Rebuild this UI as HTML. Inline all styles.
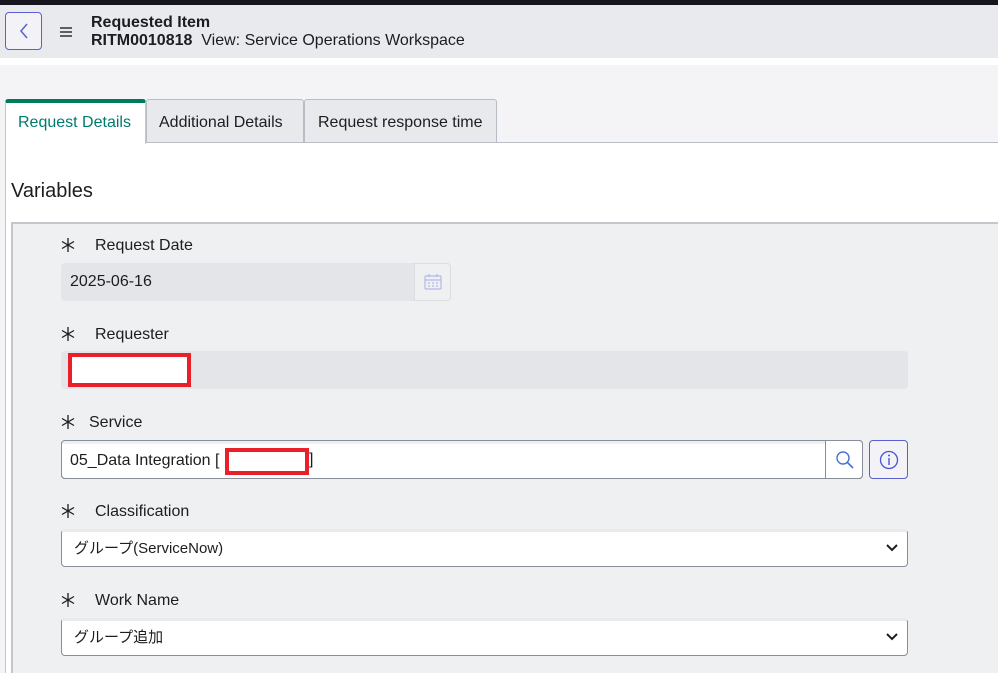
<!DOCTYPE html>
<html><head><meta charset="utf-8"><style>
*{box-sizing:border-box;margin:0;padding:0}
body{width:998px;height:673px;overflow:hidden;background:#f4f4f6;font-family:"Liberation Sans","Noto Sans CJK JP",sans-serif;color:#1d1d20;position:relative}
.a{position:absolute}
.lbl{position:absolute;left:95px;font-size:16px;line-height:20px}
.ast{position:absolute;left:61px;width:14px;height:14px}
.sel{position:absolute;left:61px;width:847px;height:38px;background:#fff;border:1px solid #878d99;border-radius:4px;font-size:15px;line-height:34px;padding-left:12px;border-top:3px solid #e9eaed}
.chev{position:absolute;right:8px;top:11px}
</style></head><body>
<svg width="0" height="0" style="position:absolute"><defs><g id="st"><path d="M7 0V14M1 3.5L13 10.5M1 10.5L13 3.5" stroke="#1d1d20" stroke-width="1.3"/></g></defs></svg>
<div class="a" style="left:0;top:0;width:998px;height:5px;background:#16141c"></div>
<div class="a" style="left:0;top:5px;width:998px;height:53px;background:#e9eaed"></div>
<div class="a" style="left:5px;top:12px;width:37px;height:38px;border:1px solid #5b5fcf;border-radius:4px;background:#f2f2f7">
<svg width="37" height="38" class="a" style="left:-1px;top:-1px"><path d="M22 24 L16 31 L22 38" transform="translate(0,-12)" stroke="#5b5fcf" stroke-width="1.5" fill="none"/></svg></div>
<svg class="a" style="left:59px;top:26px" width="14" height="12"><path d="M1 2H13M1 6H13M1 10H13" stroke="#333" stroke-width="1.4"/></svg>
<div class="a" style="left:91px;top:13px;font-size:16px;font-weight:bold;line-height:19px">Requested Item</div>
<div class="a" style="left:91px;top:31px;font-size:16px;line-height:20px"><b>RITM0010818</b>&nbsp; View: Service Operations Workspace</div>
<div class="a" style="left:0;top:58px;width:998px;height:7px;background:#fff"></div>
<div class="a" style="left:5px;top:142px;width:993px;height:531px;background:#fff;border-left:1px solid #c4c6cc"></div>
<div class="a" style="left:145px;top:142px;width:853px;height:1px;background:#b8bcc4"></div>
<div class="a" style="left:5px;top:99px;width:141px;height:45px;background:#fff;border-top:4px solid #007a5a;border-left:1px solid #c4c6cc;border-right:1px solid #c4c6cc;border-radius:3px 3px 0 0;font-size:16px;color:#007a6e;padding:11px 0 0 12px">Request Details</div>
<div class="a" style="left:146px;top:99px;width:158px;height:44px;background:#e8e9ec;border:1px solid #b8bcc4;border-radius:3px 3px 0 0;font-size:16px;padding:14px 0 0 12px">Additional Details</div>
<div class="a" style="left:304px;top:99px;width:193px;height:44px;background:#e8e9ec;border:1px solid #b8bcc4;border-radius:3px 3px 0 0;font-size:16px;padding:14px 0 0 13px">Request response time</div>
<div class="a" style="left:11px;top:179px;font-size:20px;line-height:24px">Variables</div>
<div class="a" style="left:11px;top:222px;width:987px;height:451px;background:#eff0f2;border-top:2px solid #c4c6cc;border-left:2px solid #c4c6cc"></div>
<svg class="ast" style="top:238px"><use href="#st"/></svg><div class="lbl" style="top:236px">Request Date</div>
<div class="a" style="left:61px;top:263px;width:390px;height:38px;background:#e4e5e8;border-radius:4px;font-size:16px;line-height:38px;padding-left:9px">2025-06-16</div>
<div class="a" style="left:414px;top:263px;width:37px;height:38px;background:#eff0f2;border:1px solid #dcdde1;border-radius:0 4px 4px 0">
<svg class="a" style="left:9px;top:10px" width="18" height="16"><rect x="1" y="2" width="16" height="13" rx="1" fill="none" stroke="#b4b8e8" stroke-width="1.2"/><path d="M1 6H17M5 0V3M13 0V3" stroke="#b4b8e8" stroke-width="1.2"/><path d="M4 9h2M8 9h2M12 9h2M4 12h2M8 12h2M12 12h2" stroke="#b4b8e8" stroke-width="1.3"/></svg></div>
<svg class="ast" style="top:327px"><use href="#st"/></svg><div class="lbl" style="top:325px">Requester</div>
<div class="a" style="left:61px;top:351px;width:847px;height:38px;background:#e4e5e8;border-radius:4px"></div>
<div class="a" style="left:68px;top:353px;width:123px;height:34px;background:#fff;border:4px solid #e8202a"></div>
<svg class="ast" style="top:415px"><use href="#st"/></svg><div class="lbl" style="left:89px;top:413px">Service</div>
<div class="a" style="left:61px;top:440px;width:802px;height:39px;background:#fff;border:1px solid #878d99;border-top:4px solid #eef0f2;border-radius:4px;font-size:16px;line-height:33px;padding-left:8px">05_Data Integration [</div>
<div class="a" style="left:309px;top:449px;font-size:16px;line-height:22px">]</div>
<div class="a" style="left:61px;top:440px;width:802px;height:39px;border:1px solid #878d99;border-radius:4px"></div>
<div class="a" style="left:825px;top:440px;width:38px;height:39px;border:1px solid #878d99;border-radius:0 4px 4px 0;background:#fff">
<svg class="a" style="left:9px;top:9px" width="20" height="20"><circle cx="8" cy="8" r="6" fill="none" stroke="#4a6fd8" stroke-width="1.4"/><path d="M12.5 12.5L18 18" stroke="#4a6fd8" stroke-width="1.6"/></svg></div>
<div class="a" style="left:869px;top:440px;width:39px;height:39px;border:1px solid #5b5fcf;border-radius:4px;background:#f2f2f7">
<svg class="a" style="left:8px;top:9px" width="22" height="22"><circle cx="11" cy="10" r="8.5" fill="none" stroke="#4a55d8" stroke-width="1.3"/><path d="M11 8V15" stroke="#4a55d8" stroke-width="1.4"/><circle cx="11" cy="5.5" r="1" fill="#4a55d8"/></svg></div>
<div class="a" style="left:225px;top:448px;width:84px;height:27px;border:4px solid #e8202a;background:#fff"></div>
<svg class="ast" style="top:504px"><use href="#st"/></svg><div class="lbl" style="top:502px">Classification</div>
<div class="sel" style="top:529px">グループ(ServiceNow)<svg class="chev" width="14" height="10"><path d="M2 2L7 7L12 2" stroke="#1d1d20" stroke-width="2" fill="none"/></svg></div>
<svg class="ast" style="top:593px"><use href="#st"/></svg><div class="lbl" style="top:591px">Work Name</div>
<div class="sel" style="top:618px">グループ追加<svg class="chev" width="14" height="10"><path d="M2 2L7 7L12 2" stroke="#1d1d20" stroke-width="2" fill="none"/></svg></div>
</body></html>
